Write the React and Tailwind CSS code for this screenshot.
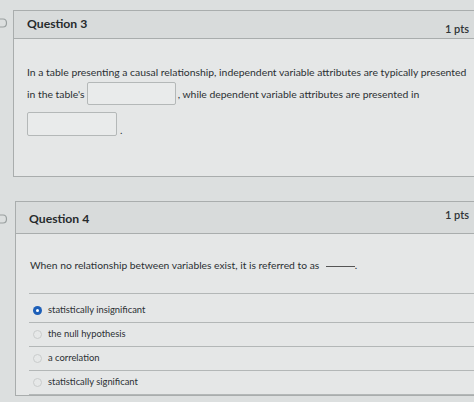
import React from 'react';

const options = [
  { label: 'statistically insignificant', checked: true },
  { label: 'the null hypothesis' },
  { label: 'a correlation' },
  { label: 'statistically significant' },
];

function FlagIcon() {
  return (
    <svg width="8" height="10" viewBox="0 0 8 10" className="shrink-0">
      <path d="M-2 1 H3 Q6.5 1 6.5 5 Q6.5 9 3 9 H-2" fill="none" stroke="#9aa0a0" strokeWidth="1.2" />
    </svg>
  );
}

function Radio({ checked }) {
  if (checked) {
    return (
      <span className="w-[9px] h-[9px] rounded-full bg-[#1d5fb8] flex items-center justify-center shrink-0">
        <span className="w-[3px] h-[3px] rounded-full bg-white" />
      </span>
    );
  }
  return <span className="w-[9px] h-[9px] rounded-full border border-[#c9cccc] bg-[#e6e8e8] shrink-0" />;
}

export default function App() {
  return (
    <div
      className="w-[474px] h-[402px] overflow-hidden bg-[#dcdfdf] text-[#2b3033]"
      style={{ fontFamily: 'Lato, "Open Sans", sans-serif' }}
    >
      {/* Question 3 */}
      <div className="flex pt-[10px]">
        <div className="w-[13px] pt-[8px] shrink-0"><FlagIcon /></div>
        <div className="flex-1 border border-r-0 border-[#a9adad] bg-[#e5e7e7]">
          <div className="h-[28px] flex items-center justify-between bg-[#d8dbdb] border-b border-[#a9adad] pl-[13px] pr-[5px]">
            <span className="text-[12.2px] font-bold text-[#262a2c]">Question 3</span>
            <span className="text-[11px] font-semibold pt-[10px] text-[#2f3437]">1 pts</span>
          </div>
          <div className="h-[137px] pl-[13px] pt-[23px] text-[10.4px] leading-[20px]">
            <p>In a table presenting a causal relationship, independent variable attributes are typically presented</p>
            <p className="flex items-center">
              in the table's
              <span className="inline-block w-[89px] h-[23px] mx-[2px] border border-[#b4b8b8] rounded-[2px] bg-[#e9ebeb]" />
              , while dependent variable attributes are presented in
            </p>
            <p className="flex items-end mt-[7px]">
              <span className="inline-block w-[90px] h-[24px] border border-[#b4b8b8] rounded-[2px] bg-[#e9ebeb]" />
              <span className="ml-[3px] leading-[12px]">.</span>
            </p>
          </div>
        </div>
      </div>

      {/* Question 4 */}
      <div className="flex mt-[24px]">
        <div className="w-[15px] pt-[13px] shrink-0"><FlagIcon /></div>
        <div className="flex-1 border border-r-0 border-[#a9adad] bg-[#e5e7e7]">
          <div className="h-[32px] flex items-center justify-between bg-[#d8dbdb] border-b border-[#a9adad] pl-[13px] pr-[5px]">
            <span className="text-[12.2px] font-bold pt-[3px] text-[#262a2c]">Question 4</span>
            <span className="text-[11px] font-semibold pb-[5px] text-[#2f3437]">1 pts</span>
          </div>
          <div className="pl-[13px]">
            <p className="pt-[23px] text-[10.3px] leading-[16px] pl-[1px]">
              When no relationship between variables exist, it is referred to as{' '}
              <span className="inline-block w-[29px] border-b border-[#555] ml-[4px] align-middle" />.
            </p>
            <div className="mt-[20px] border-t border-[#b3b7b7]">
              {options.map((o, i) => (
                <div
                  key={o.label}
                  className={`${i === 0 ? 'h-[29px] pt-[4px]' : 'h-[24px]'} flex items-center gap-[6px] pl-[4px] border-b border-[#b3b7b7] text-[9.4px]`}
                >
                  <Radio checked={o.checked} />
                  <span>{o.label}</span>
                </div>
              ))}
            </div>
          </div>
        </div>
      </div>
    </div>
  );
}
